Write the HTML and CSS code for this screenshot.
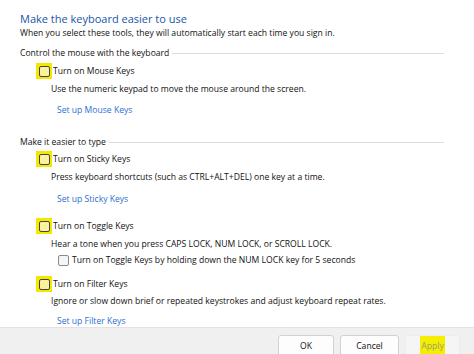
FILE: index.html
```html
<!DOCTYPE html>
<html>
<head>
<meta charset="utf-8">
<link rel="stylesheet" href="styles.css">
</head>
<body>
<div class="window">
  <div class="main">
    <h1 class="title">Make the keyboard easier to use</h1>
    <p class="subtitle">When you select these tools, they will automatically start each time you sign in.</p>

    <div class="legend legend-1"><span>Control the mouse with the keyboard</span><span class="rule"></span></div>
    <div class="check-row row-mouse"><span class="hl"><span class="box"></span></span><span>Turn on Mouse Keys</span></div>
    <p class="desc">Use the numeric keypad to move the mouse around the screen.</p>
    <a class="link link-mouse">Set up Mouse Keys</a>

    <div class="legend legend-2"><span>Make it easier to type</span><span class="rule"></span></div>
    <div class="check-row row-sticky"><span class="hl"><span class="box"></span></span><span>Turn on Sticky Keys</span></div>
    <p class="desc">Press keyboard shortcuts (such as CTRL+ALT+DEL) one key at a time.</p>
    <a class="link link-sticky">Set up Sticky Keys</a>

    <div class="check-row row-toggle"><span class="hl"><span class="box"></span></span><span>Turn on Toggle Keys</span></div>
    <p class="desc">Hear a tone when you press CAPS LOCK, NUM LOCK, or SCROLL LOCK.</p>
    <div class="sub-row"><span class="small-box"></span><span>Turn on Toggle Keys by holding down the NUM LOCK key for 5 seconds</span></div>

    <div class="check-row row-filter"><span class="hl"><span class="box"></span></span><span>Turn on Filter Keys</span></div>
    <p class="desc desc-filter">Ignore or slow down brief or repeated keystrokes and adjust keyboard repeat rates.</p>
    <a class="link link-filter">Set up Filter Keys</a>
  </div>
  <div class="footer">
    <button class="btn btn-ok">OK</button>
    <button class="btn btn-cancel">Cancel</button>
    <button class="btn btn-apply" disabled><span class="apply-hl">Apply</span></button>
  </div>
</div>
</body>
</html>
```
FILE: styles.css
```css
html, body {
  margin: 0;
  padding: 0;
  background: #ffffff;
}
body {
  font-family: "Open Sans", "Noto Sans", sans-serif;
  font-size: 8.6px;
  color: #111111;
}
.window {
  width: 474px;
  height: 354px;
  display: flex;
  flex-direction: column;
  overflow: hidden;
}
.main {
  height: 328px;
  padding: 11px 30px 0 20px;
  box-sizing: border-box;
}
.title {
  margin: 0;
  font-size: 11px;
  font-weight: normal;
  line-height: 16px;
  color: #2056a8;
}
.subtitle {
  margin: 0;
  line-height: 12px;
}
.legend {
  display: flex;
  align-items: center;
  line-height: 14px;
}
.legend .rule {
  flex: 1;
  height: 1px;
  background: #dcdcdc;
  margin-left: 3px;
}
.legend-1 { margin-top: 7px; }
.legend-2 { margin-top: 18px; }
.check-row {
  display: flex;
  align-items: center;
  height: 16px;
  margin-left: 16px;
}
.hl {
  width: 16px;
  height: 16px;
  background: #f4e800;
  display: flex;
  align-items: center;
  justify-content: center;
  margin-right: 1px;
}
.box {
  width: 9px;
  height: 9px;
  border: 1px solid #444444;
  border-radius: 2px;
  background: #f7f2a0;
}
.row-mouse { margin-top: 3px; }
.row-sticky { margin-top: 2px; }
.row-toggle { margin-top: 12px; }
.row-filter { margin-top: 9px; }
.desc {
  margin: 3px 0 0 31px;
  line-height: 14px;
}
.desc-filter { margin-top: 2px; }
.link {
  display: block;
  margin-left: 37px;
  line-height: 14px;
  color: #2d6fd0;
}
.link-mouse { margin-top: 7px; }
.link-sticky { margin-top: 8px; }
.link-filter { margin-top: 7px; line-height: 12px; }
.sub-row {
  display: flex;
  align-items: center;
  margin: 2px 0 0 38px;
  height: 14px;
}
.small-box {
  width: 9px;
  height: 9px;
  border: 1px solid #8a8a8a;
  border-radius: 2px;
  background: #f6f6f6;
  margin-right: 3px;
}
.footer {
  flex: 1;
  background: #f0f0f0;
  border-top: 1px solid #e2e2e2;
  display: flex;
  justify-content: flex-end;
  align-items: flex-start;
  gap: 6px;
  padding: 7px 14px 0 0;
}
.btn {
  font-family: inherit;
  font-size: 8.6px;
  width: 56px;
  height: 22px;
  background: #fdfdfd;
  border: 1px solid #d2d2d2;
  border-radius: 3px;
  color: #111111;
  padding: 0;
}
.btn-cancel { width: 59px; }
.btn-apply {
  width: 55px;
  background: #f5f5f5;
  border-color: #ececec;
  color: #9a9a7a;
}
.apply-hl {
  display: inline-block;
  background: #f4ee00;
  padding: 5px 1px 6px;
  line-height: 11px;
}
```
